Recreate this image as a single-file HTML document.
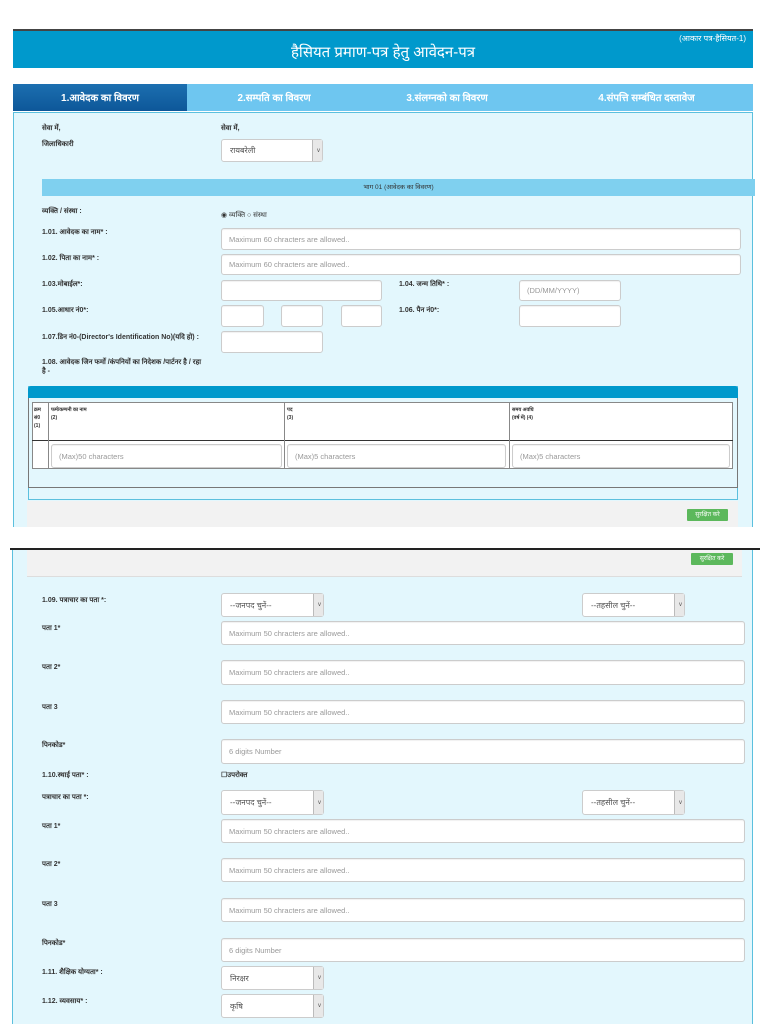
<!DOCTYPE html>
<html><head><meta charset="utf-8">
<style>
*{box-sizing:border-box;margin:0;padding:0}
body{width:768px;height:1024px;background:#fff;position:relative;overflow:hidden;font-family:"Liberation Sans",sans-serif;}
.a{position:absolute}
.lbl{position:absolute;font-size:7px;font-weight:bold;color:#333;white-space:nowrap}
.inp{position:absolute;background:#fff;border:1px solid #ccc;border-radius:3px;font-size:7.5px;color:#999;padding-left:7px;display:flex;align-items:center;box-shadow:inset 0 1px 1px rgba(0,0,0,.06)}
.sel{position:absolute;background:#fff;border:1px solid #ccc;border-radius:3px;font-size:8px;color:#555;padding-left:8px;display:flex;align-items:center}
.sel:after{content:"";position:absolute;right:0;top:0;bottom:0;width:9px;background:#e8e8e8;border-left:1px solid #bbb}
.sel b{position:absolute;right:2px;font-size:6px;color:#555;z-index:2;font-weight:normal}
.btn{position:absolute;background:#5cb85c;color:#fff;font-size:6px;text-align:center;line-height:12px;border-radius:1px}
</style></head><body>
<div class="a" style="left:13px;top:29px;width:740px;height:2px;background:#444"></div>
<div class="a" style="left:13px;top:31px;width:740px;height:37px;background:#0099cc"></div>
<div class="a" style="left:13px;top:42px;width:740px;text-align:center;color:#fff;font-size:15px">हैसियत प्रमाण-पत्र हेतु आवेदन-पत्र</div>
<div class="a" style="right:22px;top:33px;color:#fff;font-size:8px">(आकार पत्र-हैसियत-1)</div>
<div class="a" style="left:13px;top:84px;width:740px;height:27px;background:#6ec6f0"></div>
<div class="a" style="left:13px;top:84px;width:174px;height:27px;background:linear-gradient(#1c6fb0,#0d5799)"></div>
<div class="a" style="left:13px;top:90px;width:174px;text-align:center;color:#fff;font-size:10px;font-weight:bold">1.आवेदक का विवरण</div>
<div class="a" style="left:187px;top:90px;width:174px;text-align:center;color:#fff;font-size:10px;font-weight:bold">2.सम्पति का विवरण</div>
<div class="a" style="left:360px;top:90px;width:174px;text-align:center;color:#fff;font-size:10px;font-weight:bold">3.संलग्नको का विवरण</div>
<div class="a" style="left:540px;top:90px;width:213px;text-align:center;color:#fff;font-size:10px;font-weight:bold">4.संपत्ति सम्बंधित दस्तावेज</div>

<div class="a" style="left:13px;top:112px;width:740px;height:415px;background:#e3f7fd;border-left:1px solid #5bc0de;border-right:1px solid #5bc0de;border-top:1px solid #5bc0de"></div>
<div class="lbl" style="left:42px;top:124px">सेवा में,</div>
<div class="lbl" style="left:42px;top:140px">जिलाधिकारी</div>
<div class="lbl" style="left:221px;top:124px">सेवा में,</div>
<div class="sel" style="left:221px;top:139px;width:102px;height:23px">रायबरेली<b>v</b></div>
<div class="a" style="left:42px;top:179px;width:713px;height:17px;background:#7fd0ef;font-size:6.5px;text-align:center;line-height:17px;color:#333">भाग 01 (आवेदक का विवरण)</div>
<div class="lbl" style="left:42px;top:207px">व्यक्ति / संस्था :</div>
<div class="a" style="left:221px;top:211px;font-size:7px;color:#333">◉ व्यक्ति ○ संस्था</div>
<div class="lbl" style="left:42px;top:228px">1.01. आवेदक का नाम* :</div>
<div class="inp" style="left:221px;top:228px;width:520px;height:22px">Maximum 60 chracters are allowed..</div>
<div class="lbl" style="left:42px;top:254px">1.02. पिता का नाम* :</div>
<div class="inp" style="left:221px;top:254px;width:520px;height:21px">Maximum 60 chracters are allowed..</div>
<div class="lbl" style="left:42px;top:280px">1.03.मोबाईल*:</div>
<div class="inp" style="left:221px;top:280px;width:161px;height:21px"></div>
<div class="lbl" style="left:399px;top:280px">1.04. जन्म तिथि* :</div>
<div class="inp" style="left:519px;top:280px;width:102px;height:21px">(DD/MM/YYYY)</div>
<div class="lbl" style="left:42px;top:306px">1.05.आधार नं0*:</div>
<div class="inp" style="left:221px;top:305px;width:43px;height:22px"></div>
<div class="inp" style="left:281px;top:305px;width:42px;height:22px"></div>
<div class="inp" style="left:341px;top:305px;width:41px;height:22px"></div>
<div class="lbl" style="left:399px;top:306px">1.06. पैन नं0*:</div>
<div class="inp" style="left:519px;top:305px;width:102px;height:22px"></div>
<div class="lbl" style="left:42px;top:333px">1.07.डिन नं0-(Director's Identification No)(यदि हो) :</div>
<div class="inp" style="left:221px;top:331px;width:102px;height:22px"></div>
<div class="lbl" style="left:42px;top:358px;white-space:normal;width:160px;line-height:9px">1.08. आवेदक जिन फर्मो /कंपनियों का निदेशक /पार्टनर है / रहा है -</div>

<div class="a" style="left:28px;top:386px;width:710px;height:114px;border:1px solid #5bc0de;background:#e3f7fd"></div>
<div class="a" style="left:28px;top:386px;width:710px;height:12px;background:#0099cc;border-radius:3px 3px 0 0"></div>
<div class="a" style="left:28px;top:398px;width:710px;height:90px;border:1px solid #777;border-top:none"></div>
<div class="a" style="left:32px;top:402px;width:701px;height:67px;background:#fff;border:1px solid #888"></div>
<div class="a" style="left:32px;top:440px;width:701px;height:1px;background:#333"></div>
<div class="a" style="left:48px;top:402px;width:1px;height:67px;background:#888"></div>
<div class="a" style="left:284px;top:402px;width:1px;height:67px;background:#888"></div>
<div class="a" style="left:509px;top:402px;width:1px;height:67px;background:#888"></div>
<div class="a" style="left:34px;top:406px;font-size:5px;line-height:8px;color:#333;font-weight:bold">क्रम<br>सं0<br>(1)</div>
<div class="a" style="left:51px;top:406px;font-size:5px;line-height:8px;color:#333;font-weight:bold">फर्म/कम्पनी का नाम<br>(2)</div>
<div class="a" style="left:287px;top:406px;font-size:5px;line-height:8px;color:#333;font-weight:bold">पद<br>(3)</div>
<div class="a" style="left:512px;top:406px;font-size:5px;line-height:8px;color:#333;font-weight:bold">समय अवधि<br>(वर्ष में) (4)</div>
<div class="inp" style="left:51px;top:444px;width:231px;height:24px">(Max)50 characters</div>
<div class="inp" style="left:287px;top:444px;width:219px;height:24px">(Max)5 characters</div>
<div class="inp" style="left:512px;top:444px;width:218px;height:24px">(Max)5 characters</div>
<div class="a" style="left:27px;top:501px;width:711px;height:26px;background:#f2f2f2"></div>
<div class="btn" style="left:687px;top:509px;width:41px">सुरक्षित करे</div>

<div class="a" style="left:10px;top:548px;width:750px;height:2px;background:#222"></div>
<div class="a" style="left:12px;top:550px;width:741px;height:474px;background:#e3f7fd;border-left:1px solid #5bc0de;border-right:1px solid #5bc0de"></div>
<div class="a" style="left:27px;top:550px;width:715px;height:27px;background:#f2f2f2;border-bottom:1px solid #ddd"></div>
<div class="btn" style="left:691px;top:553px;width:42px">सुरक्षित करे</div>

<div class="lbl" style="left:42px;top:596px">1.09. पत्राचार का पता *:</div>
<div class="sel" style="left:221px;top:593px;width:103px;height:24px">--जनपद चुनें--<b>v</b></div>
<div class="sel" style="left:582px;top:593px;width:103px;height:24px">--तहसील चुनें--<b>v</b></div>
<div class="lbl" style="left:42px;top:624px">पता 1*</div>
<div class="inp" style="left:221px;top:621px;width:524px;height:24px">Maximum 50 chracters are allowed..</div>
<div class="lbl" style="left:42px;top:663px">पता 2*</div>
<div class="inp" style="left:221px;top:660px;width:524px;height:25px">Maximum 50 chracters are allowed..</div>
<div class="lbl" style="left:42px;top:703px">पता 3</div>
<div class="inp" style="left:221px;top:700px;width:524px;height:24px">Maximum 50 chracters are allowed..</div>
<div class="lbl" style="left:42px;top:741px">पिनकोड*</div>
<div class="inp" style="left:221px;top:739px;width:524px;height:25px">6 digits Number</div>
<div class="lbl" style="left:42px;top:771px">1.10.स्थाई पता* :</div>
<div class="a" style="left:221px;top:771px;font-size:7px;color:#333;font-weight:bold">☐उपरोक्त</div>
<div class="lbl" style="left:42px;top:793px">पत्राचार का पता *:</div>
<div class="sel" style="left:221px;top:790px;width:103px;height:25px">--जनपद चुनें--<b>v</b></div>
<div class="sel" style="left:582px;top:790px;width:103px;height:25px">--तहसील चुनें--<b>v</b></div>
<div class="lbl" style="left:42px;top:822px">पता 1*</div>
<div class="inp" style="left:221px;top:819px;width:524px;height:24px">Maximum 50 chracters are allowed..</div>
<div class="lbl" style="left:42px;top:860px">पता 2*</div>
<div class="inp" style="left:221px;top:858px;width:524px;height:24px">Maximum 50 chracters are allowed..</div>
<div class="lbl" style="left:42px;top:900px">पता 3</div>
<div class="inp" style="left:221px;top:898px;width:524px;height:24px">Maximum 50 chracters are allowed..</div>
<div class="lbl" style="left:42px;top:939px">पिनकोड*</div>
<div class="inp" style="left:221px;top:938px;width:524px;height:24px">6 digits Number</div>
<div class="lbl" style="left:42px;top:968px">1.11. शैक्षिक योग्यता* :</div>
<div class="sel" style="left:221px;top:966px;width:103px;height:24px">निरक्षर<b>v</b></div>
<div class="lbl" style="left:42px;top:997px">1.12. व्यवसाय* :</div>
<div class="sel" style="left:221px;top:994px;width:103px;height:24px">कृषि<b>v</b></div>
</body></html>
